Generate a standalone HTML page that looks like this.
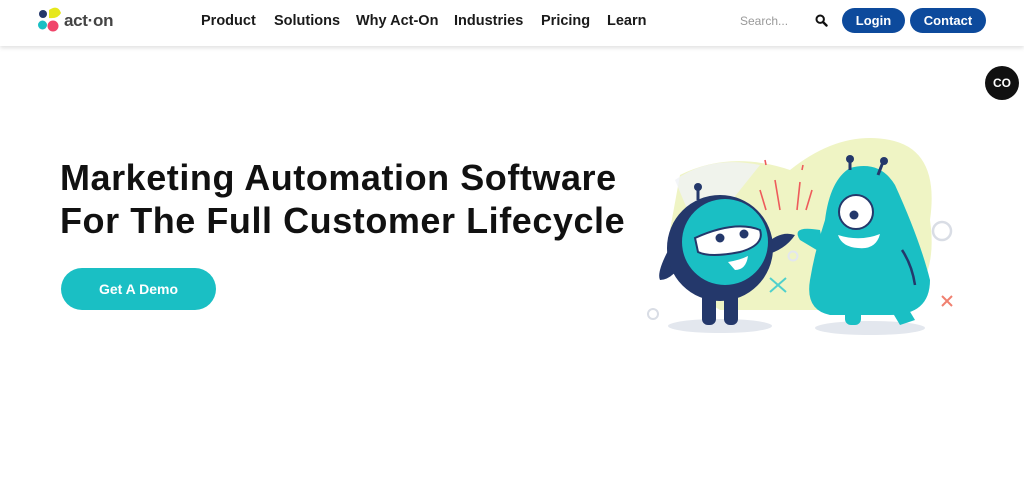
<!DOCTYPE html>
<html><head><meta charset="utf-8"><style>
*{margin:0;padding:0;box-sizing:border-box}
body{width:1024px;height:493px;overflow:hidden;background:#fff;font-family:"Liberation Sans",sans-serif;position:relative}
.hdr{position:absolute;top:0;left:0;width:1024px;height:46px;background:#fff;box-shadow:0 2px 4px rgba(0,0,0,.12)}
.nav a{position:absolute;top:13px;font-size:14.5px;font-weight:bold;color:#1a1a1a;text-decoration:none}
.btn{position:absolute;top:8px;height:25px;border-radius:13px;background:#0d4a9c;color:#fff;font-size:13px;font-weight:bold;text-align:center;line-height:25px}
h1{position:absolute;left:60px;top:156px;font-size:36px;line-height:43px;font-weight:bold;color:#111;letter-spacing:.55px}
.demo{position:absolute;left:61px;top:268px;width:155px;height:42px;border-radius:21px;background:#1abfc4;color:#fff;font-weight:bold;font-size:14px;text-align:center;line-height:42px}
</style></head><body>
<div class="hdr">
<svg style="position:absolute;left:37px;top:6px" width="30" height="28" viewBox="0 0 30 28">
<circle cx="6" cy="8" r="4" fill="#24386b"/><path d="M12 4 Q21 -2 24 7 Q21 13 12 12Z" fill="#e6e81c"/>
<circle cx="5.5" cy="19" r="4.5" fill="#1abfc4"/><circle cx="16" cy="20" r="5.5" fill="#f0456a"/></svg>
<div style="position:absolute;left:64px;top:11px;font-size:17px;color:#444;font-weight:bold;letter-spacing:-.3px">act·on</div>
<div class="nav"><a style="left:201px">Product</a><a style="left:274px">Solutions</a><a style="left:356px">Why Act-On</a><a style="left:454px">Industries</a><a style="left:541px">Pricing</a><a style="left:607px">Learn</a></div>
<div style="position:absolute;left:740px;top:14px;font-size:12px;color:#999">Search...</div>
<svg style="position:absolute;left:815px;top:14px" width="13" height="13" viewBox="0 0 13 13"><circle cx="5.2" cy="5.2" r="3.7" fill="none" stroke="#111" stroke-width="2"/><path d="M8 8l3.5 3.5" stroke="#111" stroke-width="2.4" stroke-linecap="round"/></svg>
<div class="btn" style="left:842px;width:63px">Login</div>
<div class="btn" style="left:910px;width:76px">Contact</div>
</div>
<div style="position:absolute;left:985px;top:66px;width:34px;height:34px;border-radius:50%;background:#111;color:#fff;font-size:12px;font-weight:bold;text-align:center;line-height:34px">CO</div>
<h1>Marketing Automation Software<br>For The Full Customer Lifecycle</h1>
<div class="demo">Get A Demo</div>
<svg style="position:absolute;left:640px;top:130px" width="330" height="210" viewBox="0 0 330 210">
<path d="M40 45 Q90 20 150 40 Q200 0 250 10 Q300 20 290 90 Q300 160 250 180 L80 180 Q30 150 30 100Z" fill="#eff4c4"/>
<path d="M35 50 Q70 25 120 35 L60 110Z" fill="#f0f2f6" opacity=".8"/>
<ellipse cx="80" cy="196" rx="52" ry="7" fill="#e3e7ee"/><ellipse cx="230" cy="198" rx="55" ry="7" fill="#e3e7ee"/>
<circle cx="302" cy="101" r="9" fill="none" stroke="#d9dde5" stroke-width="2.5"/>
<circle cx="13" cy="184" r="5" fill="none" stroke="#d9dde5" stroke-width="2"/>
<circle cx="153" cy="126" r="4.5" fill="none" stroke="#e3e7ee" stroke-width="2"/>
<path d="M130 148l16 14M146 148l-16 14" stroke="#4fd0cc" stroke-width="2"/>
<path d="M302 166l10 10M312 166l-10 10" stroke="#f08070" stroke-width="2"/>
<g stroke="#ee5b5b" stroke-width="1.6"><path d="M120 60l6 20M135 50l5 30M160 52l-3 28M172 60l-6 20M125 30l1 5M163 35l-1 5"/></g>
<rect x="62" y="155" width="14" height="40" rx="6" fill="#24386b"/><rect x="84" y="155" width="14" height="40" rx="6" fill="#24386b"/>
<path d="M40 100 Q15 140 20 150 Q35 150 50 120Z" fill="#24386b"/>
<path d="M125 115 Q140 100 155 105 Q145 120 125 125Z" fill="#24386b"/>
<line x1="58" y1="70" x2="58" y2="58" stroke="#24386b" stroke-width="3"/><circle cx="58" cy="57" r="4" fill="#24386b"/>
<circle cx="80" cy="118" r="53" fill="#24386b"/><circle cx="85" cy="112" r="43" fill="#1abfc4"/>
<path d="M55 108 Q95 90 120 100 Q125 115 100 122 Q70 128 58 122Z" fill="#fff" stroke="#24386b" stroke-width="2"/>
<circle cx="80" cy="108" r="4.5" fill="#24386b"/><circle cx="104" cy="104" r="4.5" fill="#24386b"/>
<path d="M88 132 Q100 130 108 126 Q106 140 95 140Z" fill="#fff"/>
<rect x="205" y="170" width="16" height="25" rx="6" fill="#1abfc4"/><path d="M245 170 L260 195 L275 190 L260 165Z" fill="#1abfc4"/>
<path d="M160 110 Q150 95 180 100 L185 125Z" fill="#1abfc4"/>
<path d="M210 38 Q240 30 255 55 Q280 110 290 150 Q290 185 250 185 L190 185 Q165 180 170 150 Q175 120 185 90 Q190 50 210 38Z" fill="#1abfc4"/>
<line x1="210" y1="40" x2="210" y2="30" stroke="#24386b" stroke-width="3"/><circle cx="210" cy="29" r="4" fill="#24386b"/>
<line x1="238" y1="45" x2="243" y2="32" stroke="#24386b" stroke-width="3"/><circle cx="244" cy="31" r="4" fill="#24386b"/>
<circle cx="216" cy="82" r="17" fill="#fff" stroke="#24386b" stroke-width="2"/><circle cx="214" cy="85" r="4.5" fill="#24386b"/>
<path d="M198 105 Q220 112 240 104 Q236 120 218 118 Q202 117 198 105Z" fill="#fff"/>
<path d="M262 120 Q272 135 275 155" stroke="#24386b" stroke-width="2.5" fill="none"/>
</svg>
</body></html>
